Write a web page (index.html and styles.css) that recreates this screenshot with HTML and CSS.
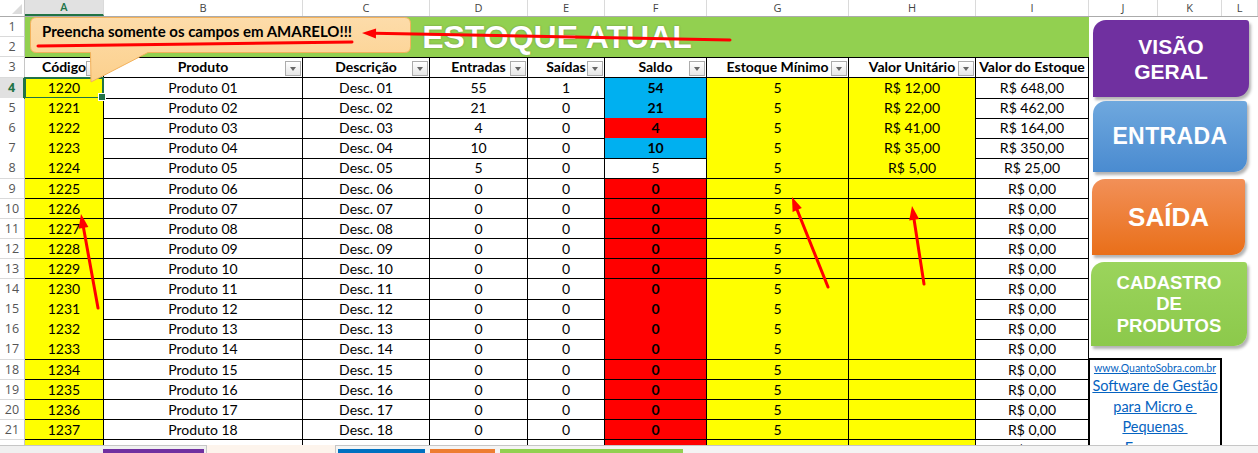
FILE: index.html
```html
<!DOCTYPE html>
<html lang="pt-BR">
<head>
<meta charset="utf-8">
<title>Estoque Atual</title>
<link rel="stylesheet" href="styles.css">
</head>
<body>
<div class="sheet">
  <div class="cols">
    <span class="corner"></span>
    <span class="ch sel">A</span><span class="ch">B</span><span class="ch">C</span><span class="ch">D</span><span class="ch">E</span><span class="ch">F</span><span class="ch">G</span><span class="ch">H</span><span class="ch">I</span><span class="ch">J</span><span class="ch">K</span><span class="ch">L</span>
  </div>
  <div class="band">
    <span class="rh r1">1</span>
    <span class="rh r2">2</span>
    <div class="title">ESTOQUE ATUAL</div>
  </div>
  <div class="grid">
    <div class="row hdr">
      <span class="rh">3</span>
      <span class="c">Código<i class="dd"></i></span>
      <span class="c">Produto<i class="dd"></i></span>
      <span class="c">Descrição<i class="dd"></i></span>
      <span class="c">Entradas<i class="dd"></i></span>
      <span class="c">Saídas<i class="dd"></i></span>
      <span class="c">Saldo<i class="dd"></i></span>
      <span class="c">Estoque Mínimo<i class="dd"></i></span>
      <span class="c">Valor Unitário<i class="dd"></i></span>
      <span class="c">Valor do Estoque</span>
    </div>
    <div class="row"><span class="rh active">4</span><span class="c y cur">1220</span><span class="c">Produto 01</span><span class="c">Desc. 01</span><span class="c">55</span><span class="c">1</span><span class="c s blue">54</span><span class="c y">5</span><span class="c y">R$ 12,00</span><span class="c">R$ 648,00</span></div>
    <div class="row"><span class="rh">5</span><span class="c y">1221</span><span class="c">Produto 02</span><span class="c">Desc. 02</span><span class="c">21</span><span class="c">0</span><span class="c s blue">21</span><span class="c y">5</span><span class="c y">R$ 22,00</span><span class="c">R$ 462,00</span></div>
    <div class="row"><span class="rh">6</span><span class="c y">1222</span><span class="c">Produto 03</span><span class="c">Desc. 03</span><span class="c">4</span><span class="c">0</span><span class="c s red">4</span><span class="c y">5</span><span class="c y">R$ 41,00</span><span class="c">R$ 164,00</span></div>
    <div class="row"><span class="rh">7</span><span class="c y">1223</span><span class="c">Produto 04</span><span class="c">Desc. 04</span><span class="c">10</span><span class="c">0</span><span class="c s blue">10</span><span class="c y">5</span><span class="c y">R$ 35,00</span><span class="c">R$ 350,00</span></div>
    <div class="row"><span class="rh">8</span><span class="c y">1224</span><span class="c">Produto 05</span><span class="c">Desc. 05</span><span class="c">5</span><span class="c">0</span><span class="c">5</span><span class="c y">5</span><span class="c y">R$ 5,00</span><span class="c">R$ 25,00</span></div>
    <div class="row"><span class="rh">9</span><span class="c y">1225</span><span class="c">Produto 06</span><span class="c">Desc. 06</span><span class="c">0</span><span class="c">0</span><span class="c s red">0</span><span class="c y">5</span><span class="c y"></span><span class="c">R$ 0,00</span></div>
    <div class="row"><span class="rh">10</span><span class="c y">1226</span><span class="c">Produto 07</span><span class="c">Desc. 07</span><span class="c">0</span><span class="c">0</span><span class="c s red">0</span><span class="c y">5</span><span class="c y"></span><span class="c">R$ 0,00</span></div>
    <div class="row"><span class="rh">11</span><span class="c y">1227</span><span class="c">Produto 08</span><span class="c">Desc. 08</span><span class="c">0</span><span class="c">0</span><span class="c s red">0</span><span class="c y">5</span><span class="c y"></span><span class="c">R$ 0,00</span></div>
    <div class="row"><span class="rh">12</span><span class="c y">1228</span><span class="c">Produto 09</span><span class="c">Desc. 09</span><span class="c">0</span><span class="c">0</span><span class="c s red">0</span><span class="c y">5</span><span class="c y"></span><span class="c">R$ 0,00</span></div>
    <div class="row"><span class="rh">13</span><span class="c y">1229</span><span class="c">Produto 10</span><span class="c">Desc. 10</span><span class="c">0</span><span class="c">0</span><span class="c s red">0</span><span class="c y">5</span><span class="c y"></span><span class="c">R$ 0,00</span></div>
    <div class="row"><span class="rh">14</span><span class="c y">1230</span><span class="c">Produto 11</span><span class="c">Desc. 11</span><span class="c">0</span><span class="c">0</span><span class="c s red">0</span><span class="c y">5</span><span class="c y"></span><span class="c">R$ 0,00</span></div>
    <div class="row"><span class="rh">15</span><span class="c y">1231</span><span class="c">Produto 12</span><span class="c">Desc. 12</span><span class="c">0</span><span class="c">0</span><span class="c s red">0</span><span class="c y">5</span><span class="c y"></span><span class="c">R$ 0,00</span></div>
    <div class="row"><span class="rh">16</span><span class="c y">1232</span><span class="c">Produto 13</span><span class="c">Desc. 13</span><span class="c">0</span><span class="c">0</span><span class="c s red">0</span><span class="c y">5</span><span class="c y"></span><span class="c">R$ 0,00</span></div>
    <div class="row"><span class="rh">17</span><span class="c y">1233</span><span class="c">Produto 14</span><span class="c">Desc. 14</span><span class="c">0</span><span class="c">0</span><span class="c s red">0</span><span class="c y">5</span><span class="c y"></span><span class="c">R$ 0,00</span></div>
    <div class="row"><span class="rh">18</span><span class="c y">1234</span><span class="c">Produto 15</span><span class="c">Desc. 15</span><span class="c">0</span><span class="c">0</span><span class="c s red">0</span><span class="c y">5</span><span class="c y"></span><span class="c">R$ 0,00</span></div>
    <div class="row"><span class="rh">19</span><span class="c y">1235</span><span class="c">Produto 16</span><span class="c">Desc. 16</span><span class="c">0</span><span class="c">0</span><span class="c s red">0</span><span class="c y">5</span><span class="c y"></span><span class="c">R$ 0,00</span></div>
    <div class="row"><span class="rh">20</span><span class="c y">1236</span><span class="c">Produto 17</span><span class="c">Desc. 17</span><span class="c">0</span><span class="c">0</span><span class="c s red">0</span><span class="c y">5</span><span class="c y"></span><span class="c">R$ 0,00</span></div>
    <div class="row"><span class="rh">21</span><span class="c y">1237</span><span class="c">Produto 18</span><span class="c">Desc. 18</span><span class="c">0</span><span class="c">0</span><span class="c s red">0</span><span class="c y">5</span><span class="c y"></span><span class="c">R$ 0,00</span></div>
    <div class="row"><span class="rh">22</span><span class="c y">1238</span><span class="c">Produto 19</span><span class="c">Desc. 19</span><span class="c">0</span><span class="c">0</span><span class="c s red">0</span><span class="c y">5</span><span class="c y"></span><span class="c">R$ 0,00</span></div>
  </div>
  <div class="tabs">
    <div class="tp1"><span class="tab t-purple"></span></div>
    <div class="tp2"></div>
    <div class="tp3"><span class="tab t-blue"></span><span class="tab t-orange"></span><span class="tab t-green"></span></div>
  </div>

  <svg class="callout" width="420" height="90" viewBox="0 0 420 90">
    <defs>
      <linearGradient id="cg" x1="0" y1="0" x2="0" y2="1">
        <stop offset="0" stop-color="#fddcaa"/>
        <stop offset="1" stop-color="#fcd08c"/>
      </linearGradient>
    </defs>
    <path d="M36.5,17.5 H404.5 Q410.5,17.5 410.5,23.5 V46.5 Q410.5,52.5 404.5,52.5 H148 L91,82 L90.5,52.5 H36.5 Q30.5,52.5 30.5,46.5 V23.5 Q30.5,17.5 36.5,17.5 Z" fill="url(#cg)" stroke="#f3b15a" stroke-width="1"/>
  </svg>
  <div class="callout-text">Preencha somente os campos em AMARELO!!!</div>

  <div class="btn visao">VISÃO<br>GERAL</div>
  <div class="btn entrada">ENTRADA</div>
  <div class="btn saida">SAÍDA</div>
  <div class="btn cadastro">CADASTRO<br>DE<br>PRODUTOS</div>

  <div class="linkbox">
    <a class="l1" href="#">www.QuantoSobra.com.br</a>
    <a class="l2" href="#">Software de Gestão</a>
    <a class="l2" href="#">para Micro e&nbsp;</a>
    <a class="l2" href="#">Pequenas&nbsp;</a>
    <a class="l2" href="#">Empresas</a>
  </div>

  <svg class="arrows" width="1258" height="453" viewBox="0 0 1258 453">
    <g stroke="#ff0000" stroke-width="3" stroke-linecap="round" fill="none">
      <line x1="38" y1="46" x2="352" y2="42"/>
      <line x1="730" y1="40" x2="374" y2="33.3"/>
      <line x1="98" y1="308" x2="83.5" y2="227.8"/>
      <line x1="828" y1="287" x2="797.2" y2="210"/>
      <line x1="924" y1="284" x2="914.1" y2="219.8"/>
    </g>
    <g fill="#ff0000">
      <polygon points="362,33 376.1,28.5 375.9,38.5"/>
      <polygon points="81,214 88.4,226.9 78.6,228.7"/>
      <polygon points="792,197 801.8,208.1 792.6,211.9"/>
      <polygon points="912,206 919.1,219.1 909.2,220.6"/>
    </g>
  </svg>
</div>
</body>
</html>
```

FILE: styles.css
```css
* { box-sizing: border-box; margin: 0; padding: 0; }

html, body { width: 1258px; height: 453px; overflow: hidden; background: #fff; }

body { font-family: Lato, "Liberation Sans", sans-serif; color: #000; }

.sheet {
  --cols: 25px 79px 199px 127px 98px 77px 102px 142px 127px 113px 69px 64px 36px;
  position: relative;
  width: 1258px;
  height: 453px;
  overflow: hidden;
  display: flex;
  flex-direction: column;
}

/* column letters */
.cols {
  display: grid;
  grid-template-columns: var(--cols);
  height: 17px;
  flex: none;
  border-bottom: 1px solid #ababab;
  background: #fff;
}
.corner { position: relative; border-right: 1px solid #c6c6c6; }
.corner::after {
  content: "";
  position: absolute;
  right: 2px;
  bottom: 2px;
  border-left: 10px solid transparent;
  border-bottom: 10px solid #dcdcdc;
}
.ch {
  font-family: "Open Sans", "Liberation Sans", sans-serif;
  font-size: 11px;
  line-height: 16px;
  color: #444;
  text-align: center;
  border-right: 1px solid #dadada;
}
.ch.sel {
  background: #e1e1e1;
  color: #217346;
  font-weight: 600;
  border-bottom: 2px solid #217346;
  line-height: 14px;
}

/* row numbers */
.rh {
  font-family: "Open Sans", "Liberation Sans", sans-serif;
  font-size: 12.5px;
  color: #555;
  text-align: center;
  border-right: 1px solid #c6c6c6;
  border-bottom: 1px solid #dadada;
  background: #fff;
}
.rh.active {
  background: #e1e1e1;
  color: #217346;
  font-weight: 700;
  border-right: 2px solid #217346;
}

/* rows 1-2: green band */
.band {
  display: grid;
  grid-template-columns: var(--cols);
  grid-template-rows: 20px 20px;
  height: 40px;
  flex: none;
}
.band .rh { grid-column: 1; line-height: 19px; }
.band .r1 { grid-row: 1; }
.band .r2 { grid-row: 2; }
.title {
  grid-column: 2 / 11;
  grid-row: 1 / 3;
  background: #92d050;
  color: #fff;
  font-family: "Liberation Sans", Arial, sans-serif;
  font-weight: 700;
  font-size: 32px;
  line-height: 40px;
  text-align: center;
  text-shadow: 0 0 2px rgba(60, 60, 60, 0.45);
}

/* table */
.grid { flex: 1; overflow: hidden; }
.row {
  display: grid;
  grid-template-columns: var(--cols);
  height: 20.11px;
}
.row .rh { line-height: 19px; }
.row.hdr { height: 21px; }
.c {
  position: relative;
  font-size: 14px;
  line-height: 19.5px;
  text-align: center;
  white-space: nowrap;
  border-right: 1px solid #000;
  border-bottom: 1px solid #000;
}
.hdr .c { font-weight: 700; border-top: 1px solid #000; line-height: 18.5px; }
.hdr .rh { line-height: 20px; }
.c.y { background: #ffff00; }
.c.s { font-weight: 700; }
.c.blue { background: #00b0f0; }
.c.red { background: #ff0000; }

.c.cur::after {
  content: "";
  position: absolute;
  left: -1px;
  top: -1px;
  right: -1px;
  bottom: -1px;
  border: 2px solid #217346;
}
.c.cur::before {
  content: "";
  position: absolute;
  right: -3px;
  bottom: -3px;
  width: 6px;
  height: 6px;
  background: #217346;
  border: 1px solid #fff;
  z-index: 1;
}

/* filter dropdown buttons */
.dd {
  position: absolute;
  right: 1px;
  top: 3px;
  width: 16px;
  height: 15px;
  border: 1px solid #acacac;
  background: linear-gradient(#ffffff, #e6e6e6);
}
.dd::after {
  content: "";
  position: absolute;
  left: 3.5px;
  top: 5px;
  border-left: 3.5px solid transparent;
  border-right: 3.5px solid transparent;
  border-top: 4px solid #666;
}

/* sheet tabs strip */
.tabs {
  position: relative;
  z-index: 5;
  height: 8px;
  flex: none;
  display: flex;
}
.tp1 {
  width: 207px;
  background: #f0f0f0;
  border-top: 1px solid #c6c6c6;
  border-right: 1px solid #c6c6c6;
  padding: 3px 0 0 103px;
  display: flex;
}
.tp2 { width: 128px; background: #fdf4ec; }
.tp3 {
  flex: 1;
  background: #f4f4f4;
  border-top: 1px solid #c6c6c6;
  border-left: 1px solid #c6c6c6;
  padding: 3px 0 0 2px;
  display: flex;
  gap: 5px;
}
.tab { display: block; height: 100%; }
.t-purple { width: 101px; background: #7030a0; }
.t-blue { width: 87px; background: #0070c0; }
.t-orange { width: 65px; background: #ed7d31; }
.t-green { width: 183px; background: #92d050; }

/* callout */
.callout { position: absolute; left: 0; top: 0; }
.callout-text {
  position: absolute;
  left: 42px;
  top: 23px;
  font-size: 15px;
  font-weight: 700;
  line-height: 17px;
  white-space: nowrap;
}

/* macro buttons */
.btn {
  position: absolute;
  display: flex;
  align-items: center;
  justify-content: center;
  text-align: center;
  color: #fff;
  font-family: "Liberation Sans", Arial, sans-serif;
  font-weight: 700;
  border-radius: 13px 3px 13px 0;
  box-shadow: 2px 3px 3px rgba(0, 0, 0, 0.3);
}
.visao {
  left: 1093px; top: 20px; width: 156px; height: 77px;
  background: #7030a0;
  font-size: 21px; line-height: 25px;
}
.entrada {
  left: 1093px; top: 101px; width: 154px; height: 71px;
  background: linear-gradient(#6fa8de, #4a8bd0);
  font-size: 23px; letter-spacing: 0.4px;
}
.saida {
  left: 1092px; top: 179px; width: 153px; height: 76px;
  background: linear-gradient(#f29058, #e96f19);
  font-size: 26px;
}
.cadastro {
  left: 1091px; top: 262px; width: 156px; height: 84px;
  background: linear-gradient(#9bd45c, #8cc94b);
  font-size: 18.5px; line-height: 21.5px;
}

/* link text box */
.linkbox {
  position: absolute;
  left: 1088px;
  top: 358px;
  width: 134px;
  height: 110px;
  border: 2px solid #000;
  background: #fff;
  display: flex;
  flex-direction: column;
  align-items: center;
}
.linkbox a { color: #0563c1; text-decoration: underline; white-space: nowrap; }
.l1 { font-size: 10.5px; line-height: 16px; }
.l2 { font-size: 14.5px; line-height: 20.5px; }

.arrows { position: absolute; left: 0; top: 0; pointer-events: none; }
```
